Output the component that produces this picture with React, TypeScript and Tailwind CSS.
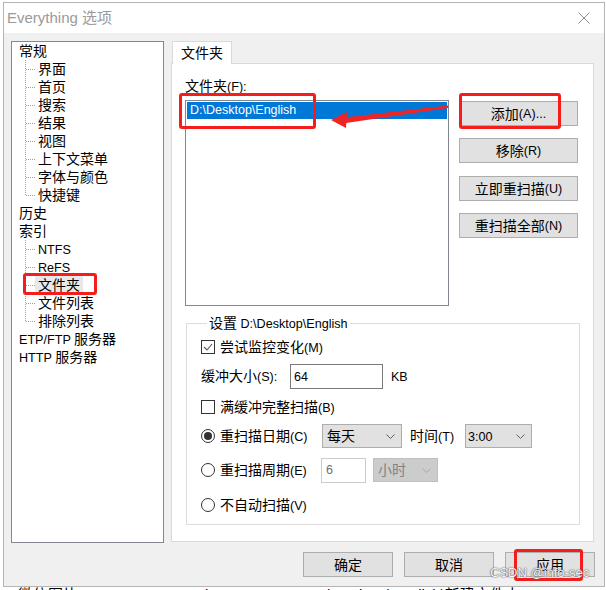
import React from "react";

type Node = { label: string; child?: boolean; last?: boolean; selected?: boolean };

const tree: Node[] = [
  { label: "常规" },
  { label: "界面", child: true },
  { label: "首页", child: true },
  { label: "搜索", child: true },
  { label: "结果", child: true },
  { label: "视图", child: true },
  { label: "上下文菜单", child: true },
  { label: "字体与颜色", child: true },
  { label: "快捷键", child: true, last: true },
  { label: "历史" },
  { label: "索引" },
  { label: "NTFS", child: true },
  { label: "ReFS", child: true },
  { label: "文件夹", child: true, selected: true },
  { label: "文件列表", child: true },
  { label: "排除列表", child: true, last: true },
  { label: "ETP/FTP 服务器" },
  { label: "HTTP 服务器" },
];

// latin runs are a bit smaller than the CJK glyphs in the original dialog
function mix(s: string) {
  return s.split(/([\u4e00-\u9fff]+)/).map((part, i) =>
    /[\u4e00-\u9fff]/.test(part) ? (
      <span key={i}>{part}</span>
    ) : (
      <span key={i} className="text-[0.9em]">
        {part}
      </span>
    )
  );
}

function Gutter({ last }: { last?: boolean }) {
  return (
    <svg width="23" height="18" className="shrink-0">
      <line x1="13.5" y1="0" x2="13.5" y2={last ? 9 : 18} stroke="#a0a0a0" strokeDasharray="1 1" />
      <line x1="14" y1="9.5" x2="23" y2="9.5" stroke="#a0a0a0" strokeDasharray="1 1" />
    </svg>
  );
}

function Btn({ label, w = "w-[119px]" }: { label: string; w?: string }) {
  return (
    <div
      className={`${w} h-[25px] shrink-0 border border-[#adadad] bg-[#e1e1e1] flex items-center justify-center text-[14px] leading-[18px]`}
    >
      {mix(label)}
    </div>
  );
}

function Check({ checked }: { checked?: boolean }) {
  return (
    <div className="w-[14px] h-[14px] shrink-0 border border-[#333333] bg-white flex items-center justify-center">
      {checked && (
        <svg width="12" height="12" viewBox="0 0 12 12">
          <polyline points="2,6 5,9 10,3" fill="none" stroke="#555" strokeWidth="1.1" />
        </svg>
      )}
    </div>
  );
}

function Radio({ checked }: { checked?: boolean }) {
  return (
    <div className="w-[14px] h-[14px] shrink-0 rounded-full border border-[#333333] bg-white flex items-center justify-center">
      {checked && <div className="w-[8px] h-[8px] rounded-full bg-[#333333]" />}
    </div>
  );
}

function Chevron({ color = "#606060" }: { color?: string }) {
  return (
    <svg width="9" height="5" viewBox="0 0 9 5" className="shrink-0">
      <polyline points="0.5,0.5 4.5,4.5 8.5,0.5" fill="none" stroke={color} strokeWidth="1" />
    </svg>
  );
}

function Select({
  value,
  w,
  pl,
  disabled,
}: {
  value: string;
  w: string;
  pl: string;
  disabled?: boolean;
}) {
  return (
    <div
      className={`${w} ${pl} h-[24px] shrink-0 border flex items-center justify-between pr-[6px] text-[14px] leading-[18px] ${
        disabled ? "bg-[#cccccc] border-[#bfbfbf] text-[#838383]" : "bg-[#e1e1e1] border-[#adadad]"
      }`}
    >
      <span>{mix(value)}</span>
      <Chevron color={disabled ? "#a8a8a8" : "#606060"} />
    </div>
  );
}

export default function App() {
  return (
    <div className="relative w-[606px] h-[590px] overflow-hidden bg-white text-black font-['Liberation_Sans','Noto_Sans_CJK_SC',sans-serif] flex flex-col">
      {/* window */}
      <div className="ml-[3px] mt-[2px] w-[602px] h-[585px] shrink-0 border border-[#b4b4b4] flex flex-col">
        {/* title bar */}
        <div className="h-[30px] bg-white flex items-center justify-between pl-[3px] pr-[14px]">
          <span className="text-[15px] text-[#9a9a9a] leading-[20px]">Everything 选项</span>
          <svg width="12" height="12" viewBox="0 0 12 12">
            <line x1="0.5" y1="0.5" x2="11.5" y2="11.5" stroke="#8c8c8c" strokeWidth="1" />
            <line x1="11.5" y1="0.5" x2="0.5" y2="11.5" stroke="#8c8c8c" strokeWidth="1" />
          </svg>
        </div>

        {/* client */}
        <div className="flex-1 bg-[#f0f0f0] pl-[7px] pt-[8px] flex flex-col">
          <div className="flex h-[502px]">
            {/* tree */}
            <div className="w-[153px] h-[502px] border border-[#828790] bg-white text-[14px] leading-[18px]">
              {tree.map((n) => (
                <div key={n.label} className="h-[18px] flex items-center pl-[7px]">
                  {n.child ? (
                    <>
                      <div className="-ml-[7px]">
                        <Gutter last={n.last} />
                      </div>
                      <span className={`px-[3px] whitespace-nowrap ${n.selected ? "bg-[#e8e8e8]" : ""}`}>
                        {mix(n.label)}
                      </span>
                    </>
                  ) : (
                    <span className="whitespace-nowrap">{mix(n.label)}</span>
                  )}
                </div>
              ))}
            </div>

            {/* tab area */}
            <div className="ml-[7px] w-[423px] flex flex-col">
              <div className="flex h-[22px]">
                <div className="relative z-10 ml-[1px] w-[60px] h-[23px] border-t border-l border-r border-[#d9d9d9] bg-white flex items-center justify-center text-[14px] leading-[18px]">
                  文件夹
                </div>
              </div>
              <div className="h-[479px] border border-[#d9d9d9] bg-white pl-[13px] pt-[13px]">
                <div className="h-[18px] text-[14px] leading-[18px]">{mix("文件夹(F):")}</div>
                <div className="mt-[5px] flex">
                  <div className="w-[264px] h-[206px] border border-[#828790] bg-white p-px">
                    <div className="h-[17px] bg-[#0078d7] text-white text-[12.5px] leading-[17px] pl-[3px]">
                      D:\Desktop\English
                    </div>
                  </div>
                  <div className="ml-[10px] mt-[1px] flex flex-col">
                    <Btn label="添加(A)..." />
                    <div className="mt-[12px]">
                      <Btn label="移除(R)" />
                    </div>
                    <div className="mt-[13px]">
                      <Btn label="立即重扫描(U)" />
                    </div>
                    <div className="mt-[12px]">
                      <Btn label="重扫描全部(N)" />
                    </div>
                  </div>
                </div>

                {/* settings group */}
                <fieldset className="mt-[8px] ml-px w-[394px] h-[211px] border border-[#dcdcdc] pl-[14px] text-[14px] leading-[18px]">
                  <legend className="ml-[6px] px-[2px] leading-[18px]">{mix("设置 D:\\Desktop\\English")}</legend>
                  <div className="mt-[2px] h-[24px] flex items-center gap-[5px]">
                    <Check checked />
                    <span>{mix("尝试监控变化(M)")}</span>
                  </div>
                  <div className="mt-[5px] h-[25px] flex items-center">
                    <span className="w-[89px] shrink-0">{mix("缓冲大小(S):")}</span>
                    <div className="w-[93px] h-[25px] border border-[#7a7a7a] bg-white flex items-center pl-[3px] text-[12.5px]">
                      64
                    </div>
                    <span className="ml-[8px] text-[12.5px]">KB</span>
                  </div>
                  <div className="mt-[6px] h-[24px] flex items-center gap-[5px]">
                    <Check />
                    <span>{mix("满缓冲完整扫描(B)")}</span>
                  </div>
                  <div className="mt-[5px] h-[24px] flex items-center">
                    <div className="w-[121px] shrink-0 flex items-center gap-[5px]">
                      <Radio checked />
                      <span className="whitespace-nowrap">{mix("重扫描日期(C)")}</span>
                    </div>
                    <Select value="每天" w="w-[80px]" pl="pl-[4px]" />
                    <span className="ml-[8px] w-[55px] shrink-0">{mix("时间(T)")}</span>
                    <Select value="3:00" w="w-[67px]" pl="pl-[2px]" />
                  </div>
                  <div className="mt-[10px] h-[24px] flex items-center">
                    <div className="w-[120px] shrink-0 flex items-center gap-[5px]">
                      <Radio />
                      <span className="whitespace-nowrap">{mix("重扫描周期(E)")}</span>
                    </div>
                    <div className="w-[45px] h-[25px] border border-[#cccccc] bg-white flex items-center pl-[4px] text-[12.5px] text-[#6d6d6d]">
                      6
                    </div>
                    <div className="ml-[7px]">
                      <Select value="小时" w="w-[65px]" pl="pl-[4px]" disabled />
                    </div>
                  </div>
                  <div className="mt-[11px] h-[24px] flex items-center gap-[5px]">
                    <Radio />
                    <span>{mix("不自动扫描(V)")}</span>
                  </div>
                </fieldset>
              </div>
            </div>
          </div>

          {/* dialog buttons */}
          <div className="mt-[9px] flex justify-end gap-[11px] pr-[9px]">
            <Btn label="确定" w="w-[90px]" />
            <Btn label="取消" w="w-[90px]" />
            <Btn label="应用" w="w-[90px]" />
          </div>
        </div>
      </div>

      {/* desktop behind the dialog */}
      <div className="flex text-[15px] leading-[16px] whitespace-nowrap">
        <span className="ml-[18px]">微信图片_20231114172844.jpg</span>
        <span className="ml-[88px]">D:\Desktop\English\新建文件夹</span>
      </div>

      {/* red annotations */}
      <div className="absolute left-[23px] top-[273px] w-[74px] h-[22px] border-[3px] border-[#f51c1c] rounded-[3px]" />
      <div className="absolute left-[179px] top-[93px] w-[137px] h-[36px] border-[3px] border-[#f51c1c] rounded-[3px]" />
      <div className="absolute left-[459px] top-[93px] w-[102px] h-[36px] border-[3px] border-[#f51c1c] rounded-[3px]" />
      <div className="absolute left-[514px] top-[549px] w-[69px] h-[32px] border-[3px] border-[#f51c1c] rounded-[3px]" />
      <svg className="absolute left-0 top-0 pointer-events-none" width="606" height="590">
        <polygon points="448,105.5 448,108 346,123 344,117.5" fill="#f02424" />
        <polygon points="331,120 347,112 346,128" fill="#f02424" />
      </svg>

      {/* watermark */}
      <div className="absolute left-[490px] top-[565px] text-[13px] leading-[16px] text-[#f4f4f4] [text-shadow:0_0_1px_#444,0_0_2px_#777]">
        CSDN @info-sec
      </div>
    </div>
  );
}
